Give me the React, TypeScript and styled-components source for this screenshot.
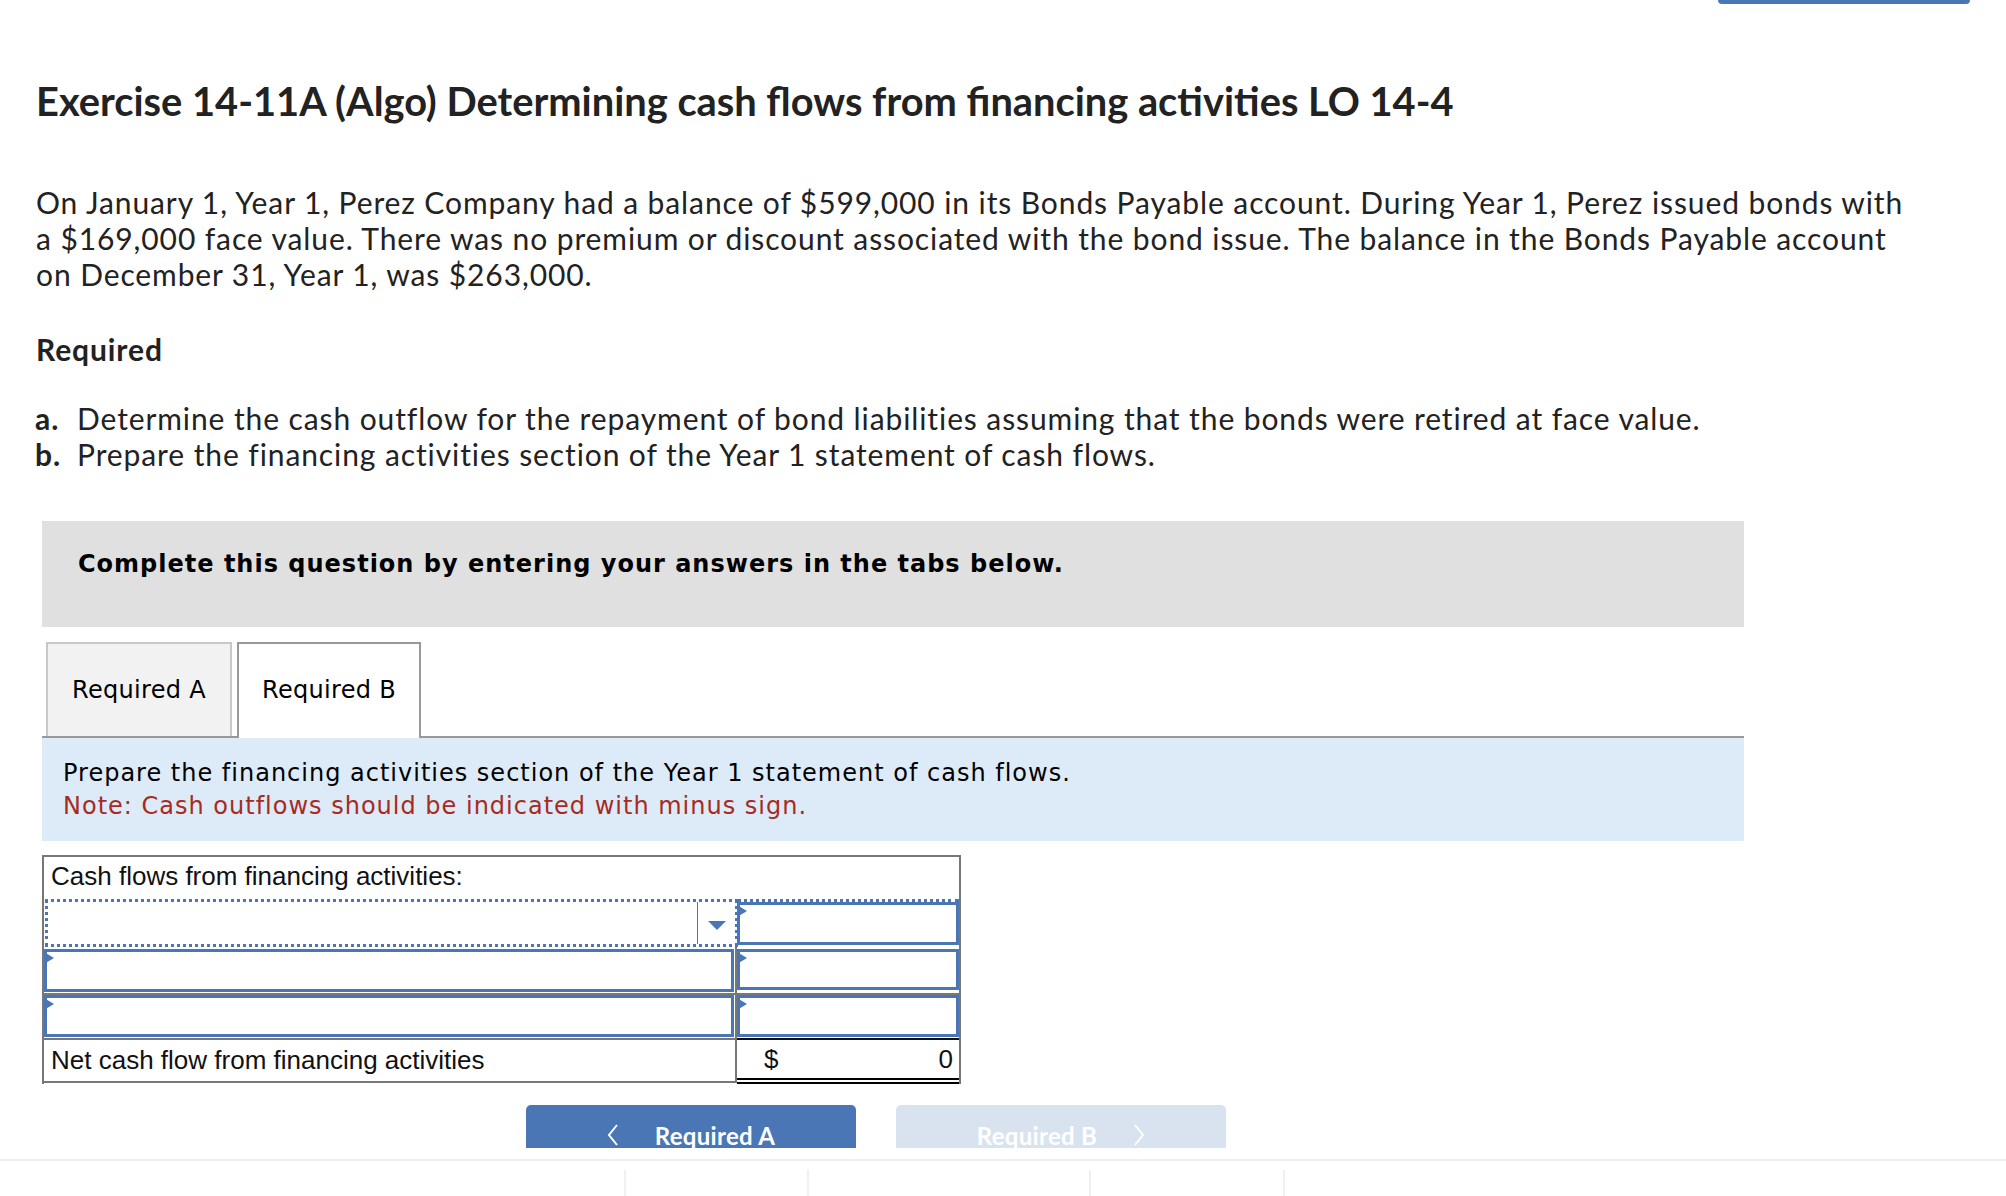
import React from "react";
import styled, { createGlobalStyle } from "styled-components";

const GlobalStyle = createGlobalStyle`
  html, body { margin: 0; padding: 0; background: #fff; }
  body { font-family: "Lato", "Liberation Sans", sans-serif; color: #222; }
  * { box-sizing: border-box; }
`;

const BLUE = "#4a76b5";

const Screen = styled.div`
  height: 1196px;
  display: flex;
  flex-direction: column;
  overflow: hidden;
`;

const Viewport = styled.div`
  flex: 1;
  min-height: 0;
  overflow: hidden;
`;

const TopStrip = styled.div`
  display: flex;
  justify-content: flex-end;
  padding-right: 36px;
`;

const TopButtonEdge = styled.div`
  width: 252px;
  height: 4px;
  background: ${BLUE};
  border-radius: 0 0 6px 6px;
`;

const Content = styled.div`
  padding: 0 36px;
`;

const Title = styled.h1`
  margin: 75px 0 0;
  font-family: "Lato", sans-serif;
  font-size: 39.8px;
  line-height: 44px;
  font-weight: 700;
  color: #222;
  white-space: nowrap;
`;

const BodyText = `
  font-size: 30px;
  line-height: 36px;
  letter-spacing: 0.9px;
`;

const Paragraph = styled.p`
  margin: 61px 0 0;
  ${BodyText}
  white-space: nowrap;
`;

const SubHeading = styled.h2`
  margin: 39px 0 0;
  ${BodyText}
  font-weight: 700;
`;

const List = styled.ol`
  list-style: none;
  margin: 33px 0 0;
  padding: 0;
`;

const ListItem = styled.li`
  display: flex;
  ${BodyText}
  white-space: nowrap;
`;

const ItemLabel = styled.span`
  font-weight: 700;
  width: 42px;
  margin-left: -1px;
`;

const Panel = styled.div`
  margin: 49px 0 0 6px;
  width: 1702px;
  font-family: "DejaVu Sans", Verdana, sans-serif;
  color: #000;
`;

const Banner = styled.div`
  height: 106px;
  background: #e0e0e0;
  padding: 28px 0 0 36px;
  font-weight: 700;
  font-size: 24px;
  letter-spacing: 1px;
  line-height: 30px;
`;

const TabBar = styled.div`
  margin-top: 15px;
  height: 96px;
  display: flex;
  align-items: flex-end;
  gap: 5px;
  padding-left: 4px;
  border-bottom: 2px solid #999;
`;

const Tab = styled.div<{ $active?: boolean }>`
  display: flex;
  align-items: center;
  justify-content: center;
  width: ${(p) => (p.$active ? 184 : 186)}px;
  height: ${(p) => (p.$active ? 96 : 94)}px;
  margin-bottom: ${(p) => (p.$active ? -2 : 0)}px;
  padding-bottom: ${(p) => (p.$active ? 2 : 0)}px;
  background: ${(p) => (p.$active ? "#fff" : "#f2f2f2")};
  border: 2px solid ${(p) => (p.$active ? "#999" : "#c8c8c8")};
  border-bottom: none;
  font-size: 24px;
  letter-spacing: 0.3px;
  line-height: 30px;
`;

const Instructions = styled.div`
  height: 103px;
  background: #ddeaf7;
  padding: 19px 0 0 21px;
  font-size: 24px;
  letter-spacing: 1px;
  line-height: 33px;
`;

const Note = styled.div`
  color: #a62b22;
`;

const Sheet = styled.div`
  margin: 14px 0 0 6px;
  width: 919px;
  border: 2px solid #777;
  border-bottom: none;
  font-family: "Liberation Sans", Arial, sans-serif;
  font-size: 26px;
  color: #111;
`;

const SheetHeader = styled.div`
  height: 42px;
  padding: 2px 0 0 7px;
  line-height: 34px;
`;

const SheetRow = styled.div<{ $h: number; $divider?: boolean }>`
  display: grid;
  grid-template-columns: 693px 222px;
  align-items: start;
  height: ${(p) => p.$h}px;
  border-top: ${(p) => (p.$divider ? "2px solid #777" : "none")};
`;

const LeftCell = styled.div<{ $pt?: number; $pb?: number }>`
  height: 100%;
  border-right: 2px solid #777;
  padding: ${(p) => p.$pt ?? 0}px 1px ${(p) => p.$pb ?? 0}px 0;
`;

const RightCell = styled.div<{ $pt?: number; $pb?: number; $dotted?: boolean }>`
  height: 100%;
  padding: ${(p) => p.$pt ?? 0}px 0 ${(p) => p.$pb ?? 0}px 0;
  border-top: ${(p) => (p.$dotted ? `3px dotted ${BLUE}` : "none")};
`;

const InputBox = styled.div<{ $marker?: boolean }>`
  position: relative;
  height: 100%;
  border: 3px solid ${BLUE};
  background: #fff;
  &::before {
    content: "";
    display: ${(p) => (p.$marker ? "block" : "none")};
    position: absolute;
    left: -3px;
    top: 0;
    width: 0;
    height: 0;
    border-left: 10px solid ${BLUE};
    border-top: 6px solid transparent;
    border-bottom: 6px solid transparent;
  }
`;

const SelectBox = styled.div`
  display: flex;
  justify-content: flex-end;
  height: 48px;
  margin: 0 -1px 0 1px;
  border: 3px dotted ${BLUE};
  background: #fff;
`;

const SelectArrow = styled.div`
  width: 38px;
  border-left: 1px solid ${BLUE};
  display: flex;
  align-items: center;
  justify-content: center;
  padding-top: 4px;
`;

const NetLabel = styled.div`
  height: 45px;
  border-right: 2px solid #777;
  border-top: 2px solid #777;
  border-bottom: 2px solid #777;
  padding: 0 0 0 7px;
  line-height: 41px;
`;

const NetTotal = styled.div`
  height: 46px;
  display: flex;
  justify-content: space-between;
  border-top: 2px solid #111;
  border-bottom: 6px double #000;
  padding: 0 6px 0 27px;
  line-height: 38px;
`;

const NavRow = styled.div`
  margin: 21px 0 0 490px;
  display: flex;
  gap: 40px;
`;

const NavButton = styled.div<{ $disabled?: boolean }>`
  width: 330px;
  height: 60px;
  border-radius: 5px 5px 0 0;
  background: ${(p) => (p.$disabled ? "#d9e3f0" : BLUE)};
  color: #fff;
  display: flex;
  align-items: center;
  justify-content: center;
  gap: 36px;
  font-family: "Lato", sans-serif;
  font-weight: 700;
  font-size: 24px;
  letter-spacing: 0.3px;
`;

const Footer = styled.div`
  height: 48px;
  padding-top: 11px;
  background: #fff;
`;

const FooterBar = styled.div`
  height: 100%;
  border-top: 2px solid #efefef;
  display: flex;
  padding: 9px 0 0 624px;
`;

const FooterCell = styled.div<{ $w: number }>`
  width: ${(p) => p.$w}px;
  border-left: 2px solid #f0f0f0;
`;

const ChevronLeft = () => (
  <svg width="12" height="22" viewBox="0 0 12 22">
    <polyline points="10,1 2,11 10,21" fill="none" stroke="#fff" strokeWidth="2" />
  </svg>
);

const ChevronRight = () => (
  <svg width="12" height="22" viewBox="0 0 12 22">
    <polyline points="2,1 10,11 2,21" fill="none" stroke="#fff" strokeWidth="2" />
  </svg>
);

const DownArrow = () => (
  <svg width="18" height="9" viewBox="0 0 18 9">
    <polygon points="0,0 18,0 9,9" fill={BLUE} />
  </svg>
);

export default function App() {
  return (
    <Screen>
      <GlobalStyle />
      <Viewport>
        <TopStrip>
          <TopButtonEdge />
        </TopStrip>
        <Content>
          <Title>Exercise 14-11A (Algo) Determining cash flows from financing activities LO 14-4</Title>
          <Paragraph>
            On January 1, Year 1, Perez Company had a balance of $599,000 in its Bonds Payable account. During Year 1, Perez issued bonds with
            <br />
            a $169,000 face value. There was no premium or discount associated with the bond issue. The balance in the Bonds Payable account
            <br />
            on December 31, Year 1, was $263,000.
          </Paragraph>
          <SubHeading>Required</SubHeading>
          <List>
            <ListItem>
              <ItemLabel>a.</ItemLabel>
              <span>Determine the cash outflow for the repayment of bond liabilities assuming that the bonds were retired at face value.</span>
            </ListItem>
            <ListItem>
              <ItemLabel>b.</ItemLabel>
              <span>Prepare the financing activities section of the Year 1 statement of cash flows.</span>
            </ListItem>
          </List>

          <Panel>
            <Banner>Complete this question by entering your answers in the tabs below.</Banner>
            <TabBar>
              <Tab>Required A</Tab>
              <Tab $active>Required B</Tab>
            </TabBar>
            <Instructions>
              <div>Prepare the financing activities section of the Year 1 statement of cash flows.</div>
              <Note>Note: Cash outflows should be indicated with minus sign.</Note>
            </Instructions>
          </Panel>

          <Sheet>
            <SheetHeader>Cash flows from financing activities:</SheetHeader>
            <SheetRow $h={48}>
              <SelectBox>
                <SelectArrow>
                  <DownArrow />
                </SelectArrow>
              </SelectBox>
              <RightCell $dotted $pb={2}>
                <InputBox $marker />
              </RightCell>
            </SheetRow>
            <SheetRow $h={46}>
              <LeftCell $pt={2} $pb={1}>
                <InputBox $marker />
              </LeftCell>
              <RightCell $pt={2} $pb={3}>
                <InputBox $marker />
              </RightCell>
            </SheetRow>
            <SheetRow $h={45} $divider>
              <LeftCell $pb={1}>
                <InputBox $marker />
              </LeftCell>
              <RightCell $pb={1}>
                <InputBox $marker />
              </RightCell>
            </SheetRow>
            <SheetRow $h={46}>
              <NetLabel>Net cash flow from financing activities</NetLabel>
              <NetTotal>
                <span>$</span>
                <span>0</span>
              </NetTotal>
            </SheetRow>
          </Sheet>

          <NavRow>
            <NavButton>
              <ChevronLeft />
              <span>Required A</span>
            </NavButton>
            <NavButton $disabled>
              <span>Required B</span>
              <ChevronRight />
            </NavButton>
          </NavRow>
        </Content>
      </Viewport>
      <Footer>
        <FooterBar>
          <FooterCell $w={183} />
          <FooterCell $w={282} />
          <FooterCell $w={194} />
          <FooterCell $w={2} />
        </FooterBar>
      </Footer>
    </Screen>
  );
}
